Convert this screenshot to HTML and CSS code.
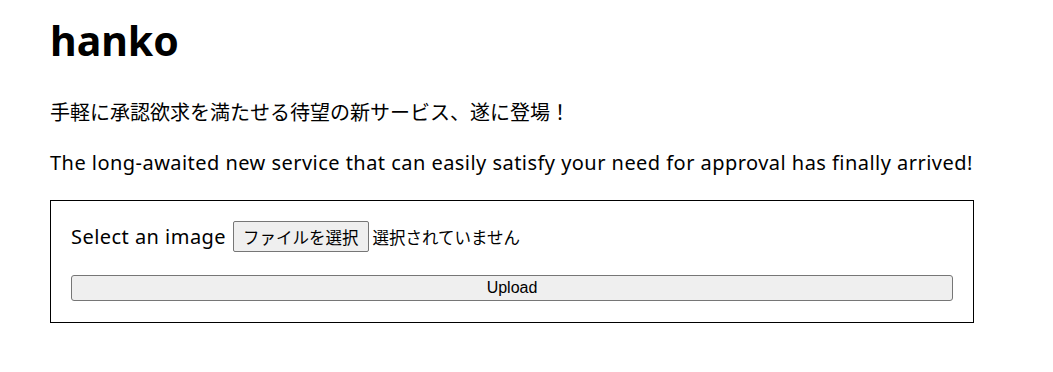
FILE: index.html
```html
<!DOCTYPE html>
<html lang="ja">
<head>
<meta charset="utf-8">
<title>hanko</title>
<link rel="stylesheet" href="styles.css">
</head>
<body>
<main class="page">
  <h1 class="title">hanko</h1>
  <p class="lead">手軽に承認欲求を満たせる待望の新サービス、遂に登場！</p>
  <p class="lead latin">The long-awaited new service that can easily satisfy your need for approval has finally arrived!</p>
  <form class="upload-box">
    <div class="field">
      <label class="label latin">Select an image</label>
      <span class="file-btn">ファイルを選択</span>
      <span class="file-none">選択されていません</span>
    </div>
    <button type="button" class="upload-btn">Upload</button>
  </form>
</main>
</body>
</html>
```

FILE: styles.css
```css
html, body {
  margin: 0;
  padding: 0;
  background: #fff;
  color: #000;
}
body {
  font-family: "Noto Sans", "Noto Sans CJK JP", sans-serif;
}
.page {
  width: 924px;
  margin-left: 50px;
  padding-top: 14px;
}
.title {
  margin: 0;
  font-size: 41px;
  font-weight: 700;
  line-height: 52px;
}
.lead {
  font-size: 20px;
  line-height: 26px;
  margin: 0;
}
.latin {
  letter-spacing: 0.46px;
}
.title + .lead {
  margin-top: 34px;
}
.lead + .lead {
  margin-top: 24px;
}
.upload-box {
  margin-top: 24px;
  width: 924px;
  border: 1px solid #000;
  padding: 20px 20px 21px 20px;
  box-sizing: border-box;
}
.field {
  display: flex;
  align-items: center;
  height: 31px;
}
.label {
  font-size: 20px;
}
.file-btn {
  margin-left: 7px;
  height: 31px;
  box-sizing: border-box;
  padding: 0 9px;
  border: 1px solid #767676;
  border-radius: 2px;
  background: #efefef;
  font-size: 16.5px;
  display: flex;
  align-items: center;
}
.file-none {
  margin-left: 4px;
  font-size: 16.5px;
}
.upload-btn {
  display: block;
  margin-top: 23px;
  width: 100%;
  height: 26px;
  border: 1px solid #767676;
  border-radius: 3px;
  background: #efefef;
  font-family: "Liberation Sans", Arial, sans-serif;
  font-size: 16px;
  color: #000;
  padding: 0;
}
```
